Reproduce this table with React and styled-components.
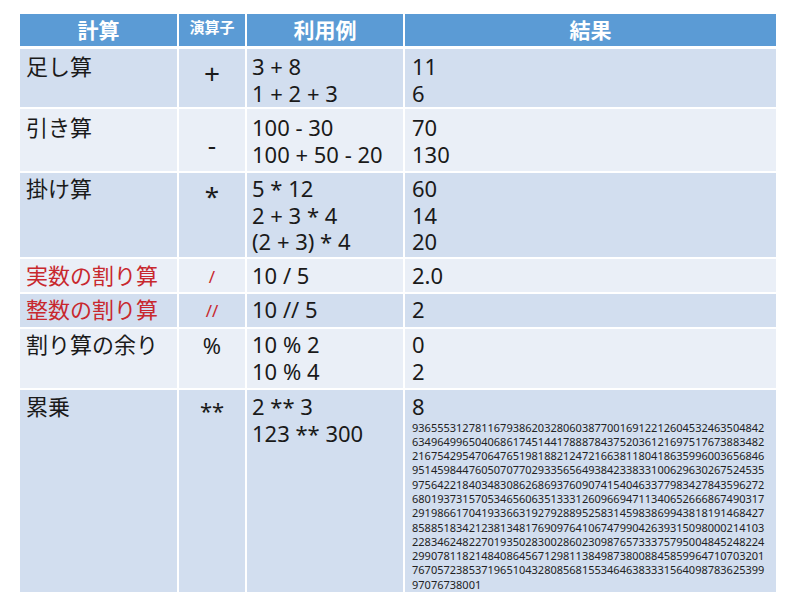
import React from "react"
import styled, { createGlobalStyle } from "styled-components"

const GlobalStyle = createGlobalStyle`
    body {
        margin: 0;
        background: #fff;
    }
`

const bigPower = (123n ** 300n).toString()
const bigLines = bigPower.match(/.{1,56}/g)

const rows = [
    { name: '足し算', op: '+', opSize: 28, opTop: 10, top: 4, h: 58, examples: ['3 + 8', '1 + 2 + 3'], results: ['11', '6'] },
    { name: '引き算', op: '-', opSize: 26, opTop: 23, top: 5, h: 62, examples: ['100 - 30', '100 + 50 - 20'], results: ['70', '130'] },
    { name: '掛け算', op: '*', opSize: 26, opTop: 10, top: 2, h: 84, examples: ['5 * 12', '2 + 3 * 4', '(2 + 3) * 4'], results: ['60', '14', '20'] },
    { name: '実数の割り算', op: '/', opSize: 17, opTop: 9, top: 3, h: 33, red: true, examples: ['10 / 5'], results: ['2.0'] },
    { name: '整数の割り算', op: '//', opSize: 17, opTop: 8, top: 2, h: 33, red: true, examples: ['10 // 5'], results: ['2'] },
    { name: '割り算の余り', op: '%', opSize: 22, opTop: 5, top: 2, h: 59, examples: ['10 % 2', '10 % 4'], results: ['0', '2'] },
    { name: '累乗', op: '**', opSize: 22, opTop: 9, top: 3, h: 202, examples: ['2 ** 3', '123 ** 300'], results: ['8'], big: true },
]

export default function App() {
    return (
        <>
            <GlobalStyle />
            <Page>
                <Table>
                    <HeadRow>
                        <HeadCell>計算</HeadCell>
                        <HeadCell $small>演算子</HeadCell>
                        <HeadCell>利用例</HeadCell>
                        <HeadCell>結果</HeadCell>
                    </HeadRow>
                    {rows.map((row, i) => (
                        <Row key={row.name} $h={row.h} $dark={i % 2 === 0}>
                            <Cell $top={row.top} $red={row.red}>{row.name}</Cell>
                            <OpCell $size={row.opSize} $top={row.opTop} $red={row.red}>{row.op}</OpCell>
                            <Cell $top={row.top} $pad={5}>
                                {row.examples.map(e => <Line key={e}>{e}</Line>)}
                            </Cell>
                            <Cell $top={row.top} $pad={7}>
                                {row.results.map(r => <Line key={r}>{r}</Line>)}
                                {row.big && (
                                    <BigNumber>
                                        {bigLines.map((l, j) => <div key={j}>{l}</div>)}
                                    </BigNumber>
                                )}
                            </Cell>
                        </Row>
                    ))}
                </Table>
            </Page>
        </>
    )
}

const Page = styled.div`
    width: 800px;
    height: 600px;
    padding: 14px 24px 0 20px;
    box-sizing: border-box;
    font-family: "Noto Sans", "Noto Sans CJK JP", sans-serif;
    color: #1a1a1a;
`

const Table = styled.div`
    display: flex;
    flex-direction: column;
    gap: 2px;
    width: 756px;
`

const columns = `
    display: grid;
    grid-template-columns: 157px 66px 156px 1fr;
    column-gap: 2px;
`

const HeadRow = styled.div`
    ${columns}
    height: 32px;
    margin-bottom: 1px;
`

const HeadCell = styled.div`
    background: #5b9bd5;
    color: #fff;
    font-weight: 700;
    font-size: ${p => p.$small ? 15 : 21}px;
    line-height: 1;
    text-align: center;
    padding-top: 6px;
    box-sizing: border-box;
`

const Row = styled.div`
    ${columns}
    height: ${p => p.$h}px;

    & > div {
        background: ${p => p.$dark ? '#d2deef' : '#eaeff7'};
    }
`

const Cell = styled.div`
    font-size: 22px;
    line-height: 26.5px;
    padding: ${p => p.$top}px 4px 0 ${p => p.$pad || 6}px;
    color: ${p => p.$red ? '#c8282e' : '#1a1a1a'};
    white-space: nowrap;
    box-sizing: border-box;
`

const OpCell = styled.div`
    font-size: ${p => p.$size}px;
    line-height: 1;
    text-align: center;
    padding-top: ${p => p.$top}px;
    color: ${p => p.$red ? '#c8282e' : '#1a1a1a'};
    box-sizing: border-box;
`

const Line = styled.div``

const BigNumber = styled.div`
    font-size: 11px;
    line-height: 14.3px;
    margin-top: 1px;
    color: #222;
`
